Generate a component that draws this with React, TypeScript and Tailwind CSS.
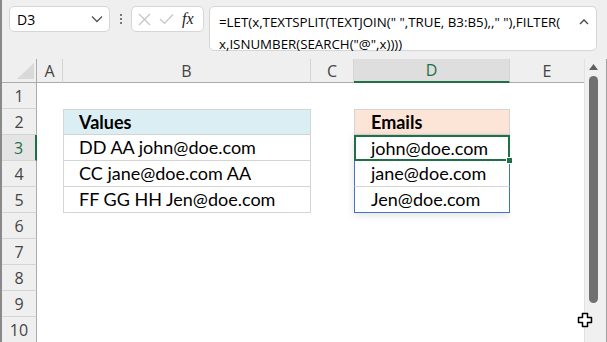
import React from "react";

function ColHeader({ w, label, selected, last }: { w: number; label: string; selected?: boolean; last?: boolean }) {
  return (
    <div
      className={
        "h-[24px] flex items-center justify-center border-b text-[16px] " +
        (last ? "" : "border-r border-r-[#d4d4d4] ") +
        (selected
          ? "bg-[#dedede] text-[#1e7145] border-b-2 border-b-[#1e7145]"
          : "bg-[#efefef] text-[#444] border-b-[#ababab]")
      }
      style={{ width: w, fontFamily: '"Open Sans", sans-serif' }}
    >
      {label}
    </div>
  );
}

function Empty() {
  return <div className="h-[26px] bg-white" />;
}

export default function App() {
  const cellFont = { fontFamily: 'Lato, "Liberation Sans", sans-serif' };
  const rows = [1, 2, 3, 4, 5, 6, 7, 8, 9, 10];
  return (
    <div className="w-[607px] h-[342px] overflow-hidden bg-[#efefef] border-l-2 border-l-[#8a8a8a] flex flex-col relative">
      {/* Top bar */}
      <div className="h-[59px] shrink-0 flex items-start pt-[6px] pl-[7px]">
        <div
          className="w-[101px] h-[26px] bg-white border border-[#d6d6d6] rounded-[5px] flex items-center justify-between pl-[7px] pr-[6px] text-[14px] text-black"
          style={{ fontFamily: '"Open Sans", sans-serif' }}
        >
          <span>D3</span>
          <svg width="12" height="8" viewBox="0 0 12 8">
            <path d="M1 1.5 L6 6.5 L11 1.5" fill="none" stroke="#555" strokeWidth="1.3" />
          </svg>
        </div>
        <div className="w-[21px] h-[26px] flex flex-col items-center justify-center gap-[2px]">
          <div className="w-[2px] h-[2px] bg-[#777]" />
          <div className="w-[2px] h-[2px] bg-[#777]" />
          <div className="w-[2px] h-[2px] bg-[#777]" />
        </div>
        <div className="w-[73px] h-[26px] bg-white border border-[#d6d6d6] rounded-[5px] flex items-center pl-[6px] gap-[8px]">
          <svg width="13" height="13" viewBox="0 0 13 13">
            <path d="M1 1 L12 12 M12 1 L1 12" stroke="#c4c4c4" strokeWidth="1.2" fill="none" />
          </svg>
          <svg width="15" height="12" viewBox="0 0 15 12">
            <path d="M1 6 L5.5 10.5 L14 1.5" stroke="#c4c4c4" strokeWidth="1.2" fill="none" />
          </svg>
          <span
            className="text-[16px] italic text-[#222] leading-none"
            style={{ fontFamily: '"Liberation Serif", serif' }}
          >
            fx
          </span>
        </div>
        <div
          className="ml-[5px] w-[388px] h-[45px] bg-white border border-[#d6d6d6] rounded-[5px] relative pl-[9px] pt-[4px] text-[13.3px] leading-[22px] text-black"
          style={{ fontFamily: '"Open Sans", sans-serif' }}
        >
          <div>=LET(x,TEXTSPLIT(TEXTJOIN(" ",TRUE, B3:B5),," "),FILTER(</div>
          <div>x,ISNUMBER(SEARCH("@",x))))</div>
          <svg className="absolute right-[7px] top-[11px]" width="10" height="7" viewBox="0 0 10 7">
            <path d="M1 6 L5 2 L9 6" fill="none" stroke="#444" strokeWidth="1.3" />
          </svg>
        </div>
      </div>

      {/* Sheet */}
      <div className="flex flex-1">
        <div className="flex w-[582px]">
          {/* Row headers */}
          <div className="w-[35px] flex flex-col">
            <div className="h-[24px] border-b border-b-[#ababab] border-r border-r-[#ababab] bg-[#efefef] relative">
              <svg className="absolute left-[15px] top-[4px]" width="17" height="16" viewBox="0 0 17 16">
                <path d="M17 0 L17 16 L0 16 Z" fill="#d9d9d9" />
              </svg>
            </div>
            {rows.map((r) => (
              <div
                key={r}
                className={
                  "h-[26px] flex items-center justify-center text-[16px] border-b border-b-[#d4d4d4] " +
                  (r === 3
                    ? "bg-[#e4e4e4] text-[#1e7145] border-r-2 border-r-[#1e7145]"
                    : "bg-[#efefef] text-[#444] border-r border-r-[#ababab]")
                }
                style={{ fontFamily: '"Open Sans", sans-serif' }}
              >
                {r}
              </div>
            ))}
          </div>

          {/* A */}
          <div className="w-[26px] flex flex-col">
            <ColHeader w={26} label="A" />
            {rows.map((r) => (
              <Empty key={r} />
            ))}
          </div>

          {/* B */}
          <div className="w-[248px] flex flex-col bg-white">
            <ColHeader w={248} label="B" />
            <Empty />
            <div className="flex flex-col text-[18px] text-black" style={cellFont}>
              <div className="h-[26px] border border-[#d4d4d4] bg-[#daeef3] font-bold pl-[15px] flex items-center">
                Values
              </div>
              <div className="h-[26px] border-x border-b border-[#d4d4d4] pl-[15px] flex items-center">
                DD AA john@doe.com
              </div>
              <div className="h-[26px] border-x border-b border-[#d4d4d4] pl-[15px] flex items-center">
                CC jane@doe.com AA
              </div>
              <div className="h-[26px] border-x border-b border-[#d4d4d4] pl-[15px] flex items-center">
                FF GG HH Jen@doe.com
              </div>
            </div>
          </div>

          {/* C */}
          <div className="w-[43px] flex flex-col">
            <ColHeader w={43} label="C" />
            {rows.map((r) => (
              <Empty key={r} />
            ))}
          </div>

          {/* D */}
          <div className="w-[156px] flex flex-col bg-white">
            <ColHeader w={156} label="D" selected />
            <Empty />
            <div className="flex flex-col text-[18px] text-black" style={cellFont}>
              <div className="h-[26px] border border-[#d4d4d4] bg-[#fce4d6] font-bold pl-[16px] flex items-center">
                Emails
              </div>
              <div className="flex flex-col shadow-[0_2px_8px_rgba(0,0,0,0.12)]">
                <div className="h-[26px] border-x border-t border-[#4472c4] border-b border-b-[#d4d4d4] pl-[16px] flex items-center relative">
                  john@doe.com
                  <div className="absolute -left-[1px] -right-[1px] -top-[1px] -bottom-[1px] border-2 border-[#1e7145]" />
                  <div className="absolute -right-[4px] -bottom-[4px] w-[7px] h-[7px] bg-[#1e7145] border border-white" />
                </div>
                <div className="h-[26px] border-x border-[#4472c4] border-b border-b-[#d4d4d4] pl-[16px] flex items-center">
                  jane@doe.com
                </div>
                <div className="h-[26px] border-x border-b border-[#4472c4] pl-[16px] flex items-center">
                  Jen@doe.com
                </div>
              </div>
            </div>
          </div>

          {/* E */}
          <div className="w-[74px] flex flex-col">
            <ColHeader w={74} label="E" last />
            {rows.map((r) => (
              <Empty key={r} />
            ))}
          </div>
        </div>

        {/* Scrollbar */}
        <div className="w-[23px] bg-[#f0f0f0] border-l border-l-[#e2e2e2] border-r border-r-[#a0a0a0] flex flex-col items-center relative">
          <svg className="mt-[5px] ml-[-4px]" width="9" height="6" viewBox="0 0 9 6">
            <path d="M0 6 L4.5 0 L9 6 Z" fill="#606060" />
          </svg>
          <div className="mt-[6px] ml-[-4px] w-[9px] h-[227px] rounded-full bg-[#707070]" />
        </div>
      </div>

      {/* Mouse cursor */}
      <svg className="absolute left-[575px] top-[312px]" width="16" height="16" viewBox="0 0 16 16">
        <path
          d="M5.5 1.5 H10.5 V5.5 H14.5 V10.5 H10.5 V14.5 H5.5 V10.5 H1.5 V5.5 H5.5 Z"
          fill="white"
          stroke="black"
          strokeWidth="1.5"
          strokeLinejoin="round"
        />
      </svg>
    </div>
  );
}
